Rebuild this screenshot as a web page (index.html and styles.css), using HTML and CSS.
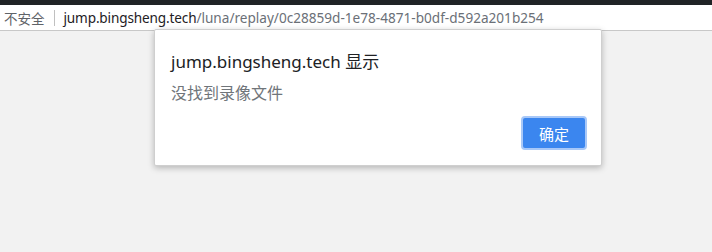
FILE: index.html
```html
<!DOCTYPE html>
<html lang="zh">
<head>
<meta charset="utf-8">
<link rel="stylesheet" href="styles.css">
</head>
<body>
<div class="topbar"></div>
<div class="omnibox">
  <span class="insecure">不安全</span>
  <span class="sep"></span>
  <span class="url"><span class="host">jump.bingsheng.tech</span>/luna/replay/0c28859d-1e78-4871-b0df-d592a201b254</span>
</div>
<div class="page">
  <div class="dialog">
    <div class="title">jump.bingsheng.tech 显示</div>
    <div class="message">没找到录像文件</div>
    <div class="actions"><button class="ok">确定</button></div>
  </div>
</div>
</body>
</html>
```
FILE: styles.css
```css
* { box-sizing: border-box; }
html, body { margin: 0; padding: 0; }
body {
  width: 712px;
  height: 252px;
  overflow: hidden;
  background: #f2f2f2;
  font-family: "Noto Sans", "Noto Sans CJK SC", sans-serif;
}
.topbar { height: 5px; background: #202326; }
.omnibox {
  height: 26px;
  background: #ffffff;
  border-bottom: 1px solid #c8c8c8;
  display: flex;
  align-items: center;
  padding-left: 4px;
  font-size: 13px;
}
.insecure { color: #5f6368; font-size: 13.5px; }
.sep { width: 1px; height: 16px; background: #c0c0c0; margin: 0 9px 0 9px; }
.url { color: #6b7077; font-size: 13.6px; }
.host { color: #1e2024; letter-spacing: -0.15px; }
.page { position: relative; height: 221px; }
.dialog {
  position: absolute;
  left: 154px;
  top: -2px;
  width: 448px;
  height: 137px;
  background: #ffffff;
  border: 1px solid #cfcfcf;
  border-radius: 2px;
  box-shadow: 0 2px 6px rgba(0,0,0,0.25);
  padding: 19px 14px 0 16px;
  display: flex;
  flex-direction: column;
}
.title { font-size: 17px; color: #202124; line-height: 26px; }
.message { font-size: 16px; color: #70757a; line-height: 22px; margin-top: 7px; }
.actions { display: flex; justify-content: flex-end; margin-top: 12px; }
.ok {
  width: 66px;
  height: 34px;
  background: #3b86ef;
  color: #ffffff;
  border: 2px solid #a8c8f8;
  border-radius: 4px;
  font-family: "Noto Sans CJK SC", sans-serif;
  font-size: 15px;
  padding: 0;
}
```
